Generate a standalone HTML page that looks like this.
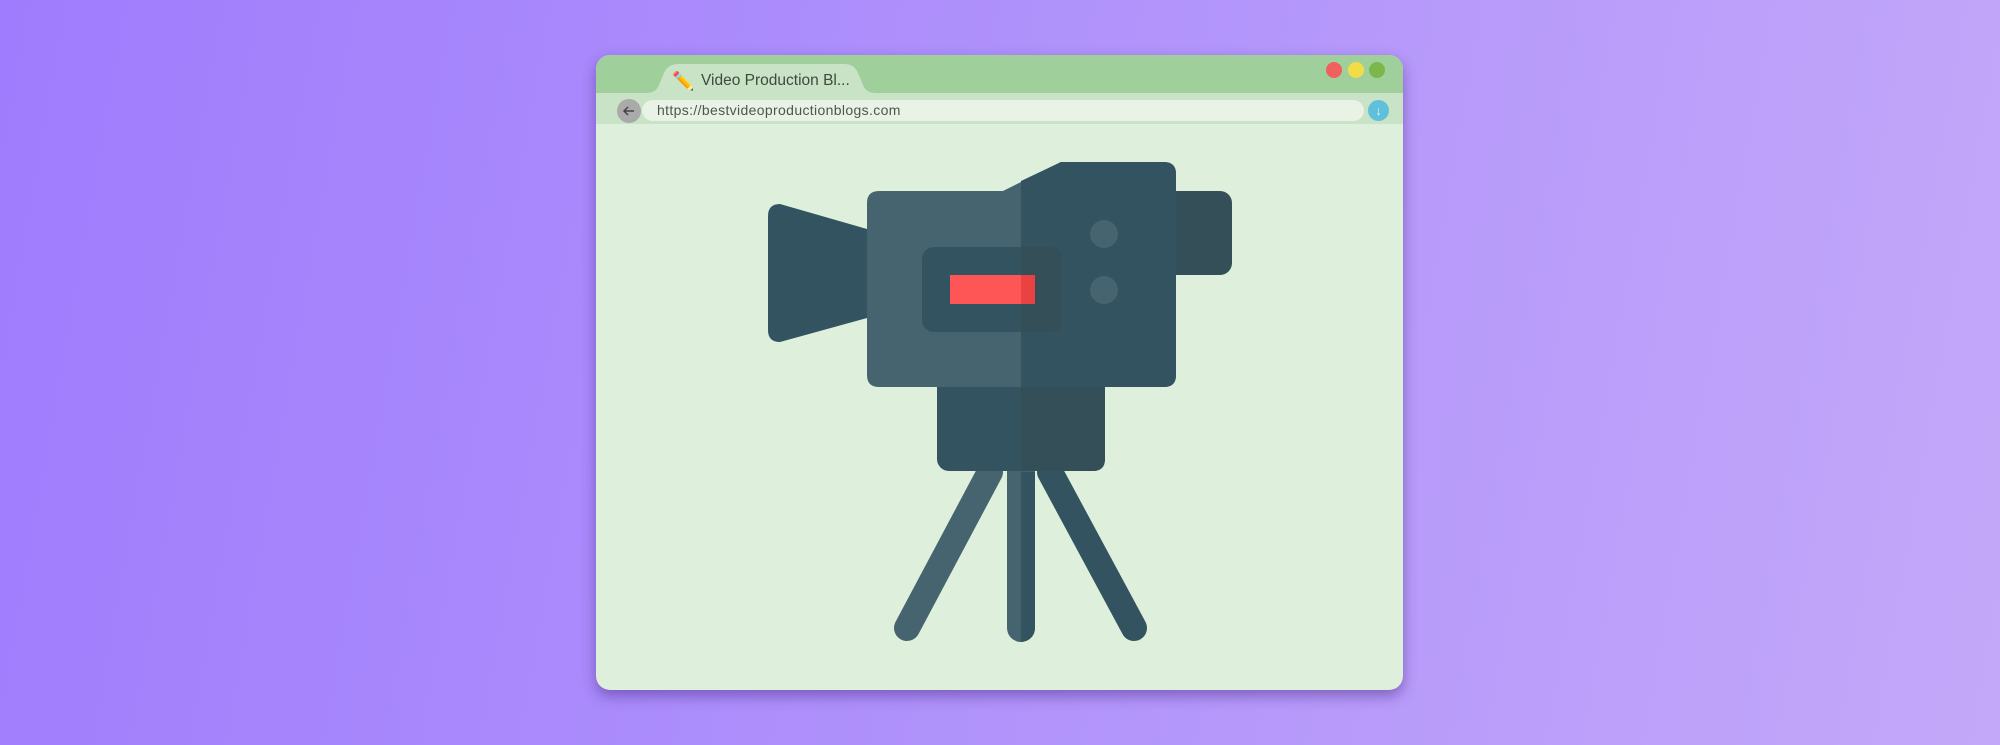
<!DOCTYPE html>
<html><head><style>
html,body{margin:0;padding:0}
body{width:2000px;height:745px;overflow:hidden;background:linear-gradient(100deg,#9f7cfd 0%,#b092fb 50%,#c3a8f9 100%);position:relative;font-family:"Liberation Sans",sans-serif}
.win{position:absolute;left:596px;top:55px;width:807px;height:635px;border-radius:14px;background:#def0dc;overflow:hidden;box-shadow:0 6px 14px rgba(60,30,120,.45)}
.top{position:absolute;left:0;top:0;width:100%;height:38px;background:#9fd09b}
.addr{position:absolute;left:0;top:38px;width:100%;height:31px;background:#c8e3c5}
.dot{position:absolute;top:7px;width:16px;height:16px;border-radius:50%}
</style></head><body>
<div class="win">
<div class="top"></div>
<svg width="807" height="40" style="position:absolute;left:0;top:0">
<path d="M50 38 Q60 38 63 30 L68 18 Q72 9 82 9 H248 Q258 9 262 18 L267 30 Q270 38 280 38Z" fill="#c8e3c5"/>
</svg>
<div style="position:absolute;left:76px;top:16px;font-size:18px">✏️</div>
<div style="position:absolute;left:105px;top:17px;font-size:15.5px;color:#3d4a3d">Video Production Bl...</div>
<div class="dot" style="left:730px;background:#f0605c"></div>
<div class="dot" style="left:752px;background:#f3dc48"></div>
<div class="dot" style="left:773px;background:#7cb74c"></div>
<div class="addr"></div>
<div style="position:absolute;left:46px;top:45px;width:722px;height:21px;border-radius:11px;background:#e8f2e5"></div>
<div style="position:absolute;left:21px;top:44px;width:24px;height:24px;border-radius:50%;background:#a9aaa9"></div>
<svg width="24" height="24" style="position:absolute;left:21px;top:44px"><path d="M17 12 H7 M11 8 L7 12 L11 16" stroke="#444" stroke-width="1.5" fill="none"/></svg>
<div style="position:absolute;left:772px;top:45px;width:21px;height:21px;border-radius:50%;background:#5fc0dc;color:#d7f0f7;font-size:13px;line-height:21px;text-align:center">↓</div>
<div style="position:absolute;left:61px;top:47px;font-size:14px;letter-spacing:0.35px;color:#4d574d">https://bestvideoproductionblogs.com</div>
</div>
<svg width="2000" height="745" style="position:absolute;left:0;top:0">
<g stroke-linecap="round" fill="none">
<line x1="990" y1="472" x2="907" y2="628" stroke="#466470" stroke-width="26"/>
<line x1="1050" y1="472" x2="1134" y2="628" stroke="#335361" stroke-width="26"/>
<line x1="1021" y1="472" x2="1021" y2="628" stroke="#466470" stroke-width="28"/>
</g>
<path d="M1021 472 V642 a14 14 0 0 0 14 -14 V472Z" fill="#335361"/>
<path d="M780 204 L867 229 V318 L780 342 Q768 342 768 330 V216 Q768 204 780 204Z" fill="#335361"/>
<rect x="1160" y="191" width="72" height="84" rx="12" fill="#344f57"/>
<rect x="937" y="370" width="168" height="101" rx="12" fill="#335361"/>
<path d="M1021 370 H1105 V459 Q1105 471 1093 471 H1021Z" fill="#344f57"/>
<path d="M879 191 H1003 L1061 162 H1164 Q1176 162 1176 174 V375 Q1176 387 1164 387 H879 Q867 387 867 375 V203 Q867 191 879 191Z" fill="#466470"/>
<path d="M1021 181 L1061 162 H1164 Q1176 162 1176 174 V375 Q1176 387 1164 387 H1021Z" fill="#335361"/>
<rect x="922" y="247" width="140" height="85" rx="12" fill="#335361"/>
<path d="M1021 247 H1050 Q1062 247 1062 259 V320 Q1062 332 1050 332 H1021Z" fill="#344f57"/>
<rect x="950" y="275" width="85" height="29" fill="#fe5656"/>
<rect x="1021" y="275" width="14" height="29" fill="#ea4242"/>
<circle cx="1104" cy="234" r="14" fill="#466470"/>
<circle cx="1104" cy="290" r="14" fill="#466470"/>
</svg>
</body></html>
